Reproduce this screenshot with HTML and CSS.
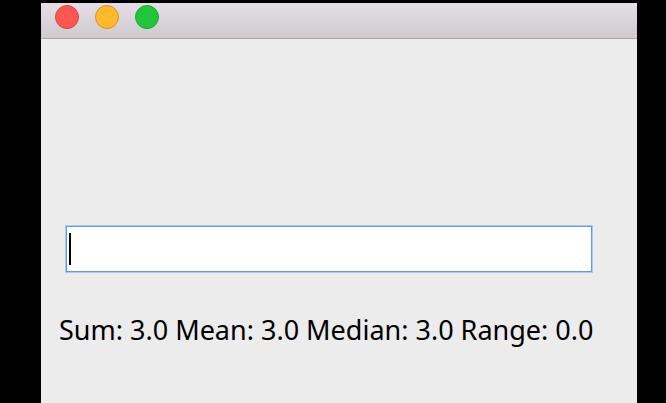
FILE: index.html
```html
<!DOCTYPE html>
<html lang="en">
<head>
<meta charset="utf-8">
<title>Statistics</title>
<link rel="stylesheet" href="styles.css">
</head>
<body>
<main class="window">
  <header class="titlebar">
    <button class="light close" type="button" aria-label="Close"></button>
    <button class="light minimize" type="button" aria-label="Minimize"></button>
    <button class="light zoom" type="button" aria-label="Zoom"></button>
  </header>
  <div class="content">
    <div class="field">
      <input class="entry" type="text" aria-labelledby="summary">
      <span class="caret"></span>
    </div>
    <p class="summary" id="summary">Sum: 3.0 Mean: 3.0 Median: 3.0 Range: 0.0</p>
  </div>
</main>
</body>
</html>
```
FILE: styles.css
```css
* { box-sizing: border-box; }
body {
  margin: 0;
  min-height: 100vh;
  padding: 3px 29px 0 41px;
  background: #000;
  display: flex;
  font-family: "Lucida Grande", "Noto Sans", sans-serif;
}
.window {
  flex: 1;
  min-width: 0;
  background: #ececec;
}
.titlebar {
  height: 36px;
  display: flex;
  gap: 16px;
  padding: 2px 14px;
  background: linear-gradient(#e4dfe4, #cecace);
  border-bottom: 1px solid #aaa5aa;
}
.light {
  width: 24px;
  height: 24px;
  padding: 0;
  border-radius: 50%;
  border: 1px solid;
}
.close { background: #ff5650; border-color: #d8444a; }
.minimize { background: #ffb92b; border-color: #d3922f; }
.zoom { background: #22c53a; border-color: #1ba535; }
.content { padding: 187px 18px 0; }
.field {
  position: relative;
  margin: 0 27px 0 7px;
}
.entry {
  display: block;
  width: 100%;
  height: 46px;
  padding: 0 4px;
  border: 1px solid #669ad8;
  box-shadow: 0 0 0 1px #a9c9f0;
  background: #fff;
  font: inherit;
  font-size: 27px;
  outline: none;
}
.caret {
  position: absolute;
  left: 3px;
  top: 7px;
  width: 2px;
  height: 32px;
  background: #000;
}
.summary {
  margin: 40px 0 0;
  font-size: 27px;
  line-height: 36px;
  white-space: nowrap;
  color: #000;
}
```
